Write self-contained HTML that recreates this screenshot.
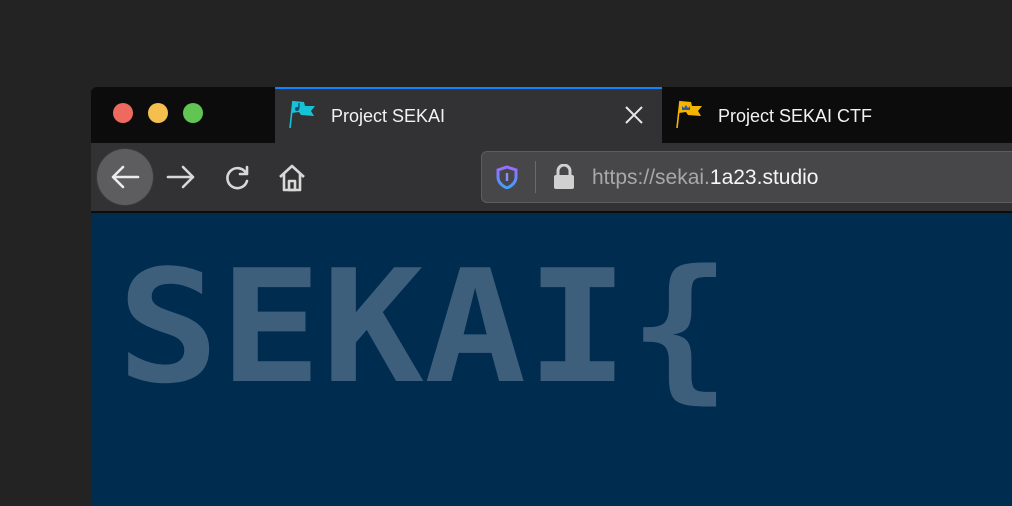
<!DOCTYPE html>
<html><head><meta charset="utf-8"><style>
html,body{margin:0;padding:0;width:1012px;height:506px;overflow:hidden;background:#232323;font-family:"Liberation Sans",sans-serif}
.a{position:absolute}
</style></head><body>
<div class="a" style="left:91px;top:87px;width:921px;height:56px;background:#0c0c0d;border-top-left-radius:6px"></div>
<div class="a" style="left:113px;top:103px;width:20px;height:20px;border-radius:50%;background:#ee6a5f"></div>
<div class="a" style="left:148px;top:103px;width:20px;height:20px;border-radius:50%;background:#f5bf4f"></div>
<div class="a" style="left:183px;top:103px;width:20px;height:20px;border-radius:50%;background:#61c554"></div>
<div class="a" style="left:275px;top:87px;width:387px;height:56px;background:#323234"></div>
<div class="a" style="left:275px;top:87px;width:387px;height:2px;background:#0a84ff"></div>
<svg class="a" style="left:286px;top:98px" width="32" height="32" viewBox="0 0 32 32">
<line x1="4" y1="30" x2="7" y2="3" stroke="#17c2d6" stroke-width="1.6"/>
<path d="M7 3 L18 4 L19 8 L29 8 L25 13 L28 18 L15 17 L13 14 L6 15 Z" fill="#17c2d6"/>
<circle cx="11" cy="11" r="2" fill="#0d4f7a"/><line x1="12.8" y1="11" x2="13" y2="5" stroke="#0d4f7a" stroke-width="1.4"/>
</svg>
<div class="a" style="left:331px;top:106px;color:#f2f2f2;font-size:18px">Project SEKAI</div>
<svg class="a" style="left:624px;top:105px" width="20" height="20"><path d="M2 2L18 18M18 2L2 18" stroke="#e8e8e8" stroke-width="2"/></svg>
<svg class="a" style="left:673px;top:98px" width="32" height="32" viewBox="0 0 32 32">
<line x1="4" y1="30" x2="7" y2="3" stroke="#f5b400" stroke-width="1.6"/>
<path d="M7 3 L18 4 L19 8 L29 8 L25 13 L28 18 L15 17 L13 14 L6 15 Z" fill="#f5b400"/>
<path d="M9 12 L9 8 L11 10 L13 7 L15 10 L17 8 L17 12 Z" fill="#2a5a9a"/>
</svg>
<div class="a" style="left:718px;top:106px;color:#f2f2f2;font-size:18px">Project SEKAI CTF</div>
<div class="a" style="left:91px;top:143px;width:921px;height:68px;background:#323234"></div>
<div class="a" style="left:91px;top:211px;width:921px;height:2px;background:#0c0c0d"></div>
<div class="a" style="left:97px;top:149px;width:56px;height:56px;border-radius:50%;background:#5d5d5f;box-shadow:0 0 0 1px #3a3a3c"></div>
<svg class="a" style="left:108px;top:160px" width="34" height="34" viewBox="0 0 34 34" fill="none" stroke="#ececec" stroke-width="2.6" stroke-linecap="round" stroke-linejoin="round">
<path d="M30 17H5M15 7L5 17L15 27"/></svg>
<svg class="a" style="left:164px;top:160px" width="34" height="34" viewBox="0 0 34 34" fill="none" stroke="#d8d8d8" stroke-width="2.6" stroke-linecap="round" stroke-linejoin="round">
<path d="M4 17H29M19 7L29 17L19 27"/></svg>
<svg class="a" style="left:222px;top:163px" width="30" height="30" viewBox="0 0 30 30" fill="none" stroke="#d8d8d8" stroke-width="2.6" stroke-linecap="round" stroke-linejoin="round">
<path d="M24 10A10 10 0 1 0 25 18"/><path d="M25 4V11H18" fill="none"/></svg>
<svg class="a" style="left:276px;top:162px" width="32" height="32" viewBox="0 0 32 32" fill="none" stroke="#d8d8d8" stroke-width="2.6" stroke-linejoin="round">
<path d="M4 15L16 4L28 15M8 12V28H24V12"/><rect x="13" y="19" width="6" height="9"/></svg>
<div class="a" style="left:481px;top:151px;width:540px;height:50px;border-radius:6px;background:#474749;border:1px solid #5d5d5f"></div>
<svg class="a" style="left:496px;top:165px" width="22" height="24" viewBox="0 0 22 24">
<defs><linearGradient id="g" x1="0" y1="0" x2="0" y2="1"><stop offset="0" stop-color="#9b6cff"/><stop offset="1" stop-color="#3fa0ff"/></linearGradient></defs>
<path d="M11 2L20 5V12C20 17 16 21 11 23C6 21 2 17 2 12V5Z" fill="none" stroke="url(#g)" stroke-width="3"/>
<rect x="9.8" y="8" width="2.4" height="8" fill="#8a8cff"/></svg>
<div class="a" style="left:535px;top:161px;width:1px;height:32px;background:#6a6a6c"></div>
<svg class="a" style="left:552px;top:164px" width="24" height="26" viewBox="0 0 24 26">
<path d="M6 11V7A6 6 0 0 1 18 7V11" fill="none" stroke="#d0d0d0" stroke-width="3"/>
<rect x="2" y="11" width="20" height="14" rx="2" fill="#d0d0d0"/></svg>
<div class="a" style="left:592px;top:166px;font-size:21px;color:#a8a8aa">https://sekai.<span style="color:#f5f5f5">1a23.studio</span></div>
<div class="a" style="left:91px;top:213px;width:921px;height:293px;background:#002c4f"></div>
<svg class="a" style="left:0;top:0" width="1012" height="506">
<text x="117" y="381" font-family="DejaVu Sans Mono, monospace" font-weight="bold" font-size="156" fill="#3e5f7c" textLength="614" lengthAdjust="spacingAndGlyphs">SEKAI{</text>
</svg>
</body></html>
